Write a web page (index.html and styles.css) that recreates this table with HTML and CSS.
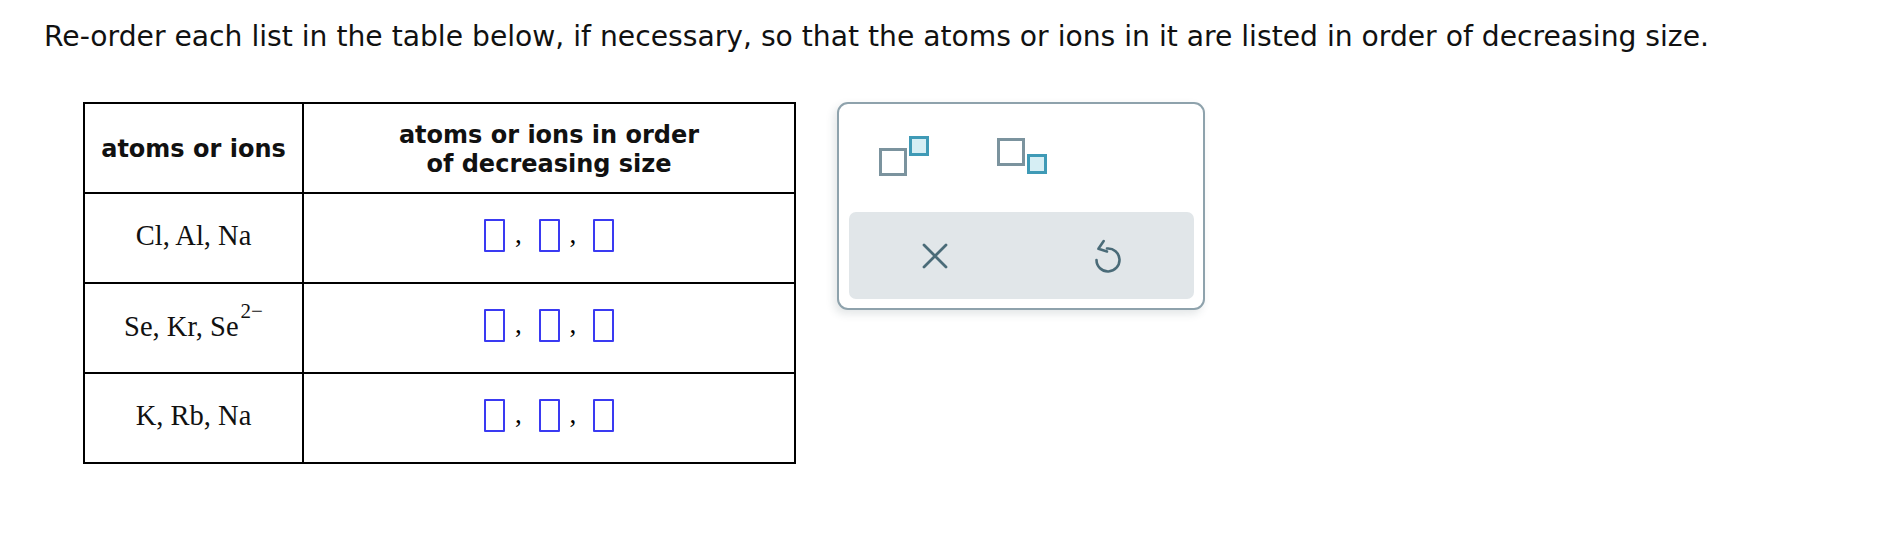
FILE: index.html
```html
<!DOCTYPE html>
<html>
<head>
<meta charset="utf-8">
<link rel="stylesheet" href="styles.css">
</head>
<body>
<p class="prompt">Re-order each list in the table below, if necessary, so that the atoms or ions in it are listed in order of decreasing size.</p>
<div class="work">
  <div class="grid">
    <div class="cell head"><span>atoms or ions</span></div>
    <div class="cell head"><span>atoms or ions in order<br>of decreasing size</span></div>

    <div class="cell chem"><span>Cl, Al, Na</span></div>
    <div class="cell ans"><span><span class="slot"></span>, <span class="slot"></span>, <span class="slot"></span></span></div>

    <div class="cell chem"><span>Se, Kr, Se<sup class="charge">2−</sup></span></div>
    <div class="cell ans"><span><span class="slot"></span>, <span class="slot"></span>, <span class="slot"></span></span></div>

    <div class="cell chem"><span>K, Rb, Na</span></div>
    <div class="cell ans"><span><span class="slot"></span>, <span class="slot"></span>, <span class="slot"></span></span></div>
  </div>

  <div class="panel">
    <div class="tools">
      <div class="tool">
        <svg width="50" height="40" viewBox="0 0 50 40">
          <rect x="1.5" y="13.5" width="25" height="25" fill="#fff" stroke="#7b939e" stroke-width="3"/>
          <rect x="31.5" y="1.5" width="17" height="17" fill="#d6eef4" stroke="#3f9ab6" stroke-width="3"/>
        </svg>
      </div>
      <div class="tool">
        <svg width="50" height="36" viewBox="0 0 50 36">
          <rect x="1.5" y="1.5" width="25" height="25" fill="#fff" stroke="#7b939e" stroke-width="3"/>
          <rect x="31.5" y="17.5" width="17" height="17" fill="#d6eef4" stroke="#3f9ab6" stroke-width="3"/>
        </svg>
      </div>
    </div>
    <div class="actions">
      <div class="act">
        <svg width="26" height="26" viewBox="0 0 26 26">
          <path d="M2 2 L24 24 M24 2 L2 24" stroke="#4a6b78" stroke-width="2.8" stroke-linecap="round" fill="none"/>
        </svg>
      </div>
      <div class="act">
        <svg width="26" height="34" viewBox="0 0 26 34">
          <path d="M12 9.5 A11.5 11.5 0 1 1 1.5 21" stroke="#4a6b78" stroke-width="2.6" stroke-linecap="round" fill="none"/>
          <path d="M8.7 2 L3.4 9.8 L12 12.5" stroke="#4a6b78" stroke-width="2.6" stroke-linecap="round" stroke-linejoin="round" fill="none"/>
        </svg>
      </div>
    </div>
  </div>
</div>
</body>
</html>
```

FILE: styles.css
```css
html, body {
  margin: 0;
  padding: 0;
  background: #fff;
}

body {
  color: #000;
}

.prompt {
  margin: 0;
  padding: 21px 0 0 44px;
  font-family: "DejaVu Sans", Verdana, sans-serif;
  font-size: 28.2px;
  line-height: 32px;
  color: #111;
}

.work {
  display: flex;
  align-items: flex-start;
  margin: 49px 0 0 83px;
  gap: 41px;
}

.grid {
  display: grid;
  grid-template-columns: 219px 492px;
  grid-auto-rows: 90px;
  border-left: 2px solid #000;
  border-top: 2px solid #000;
}

.cell {
  border-right: 2px solid #000;
  border-bottom: 2px solid #000;
  display: flex;
  align-items: center;
  justify-content: center;
  text-align: center;
}

.head {
  font-family: "DejaVu Sans", Verdana, sans-serif;
  font-weight: bold;
  font-size: 24px;
  line-height: 29px;
  color: #111;
  padding-top: 3px;
}

.chem {
  font-family: "Liberation Serif", "Times New Roman", serif;
  font-size: 28.5px;
  line-height: 28px;
  color: #111;
  padding-bottom: 4px;
}

.charge {
  font-size: 21px;
  vertical-align: 18px;
  line-height: 0;
  margin-left: 2px;
}

.ans {
  font-family: "Liberation Serif", "Times New Roman", serif;
  font-size: 27px;
  line-height: 27px;
  padding-bottom: 5px;
  white-space: pre;
}

.slot {
  display: inline-block;
  width: 17px;
  height: 29px;
  border: 2px solid #3a3af2;
  border-radius: 1px;
  margin: 0 10px;
  vertical-align: -9px;
}

.panel {
  width: 345px;
  padding: 0 9px 9px 10px;
  border: 2px solid #8ea2ac;
  border-radius: 11px;
  background: #fff;
  box-shadow: -3px 4px 9px rgba(40, 60, 70, 0.13);
}

.tools {
  display: flex;
  height: 104px;
  margin-left: -4px;
}

.tool {
  width: 118px;
  display: flex;
  align-items: center;
  justify-content: center;
}

.actions {
  margin-top: 4px;
  height: 87px;
  display: flex;
  background: #e1e6e9;
  border-radius: 7px;
}

.act {
  flex: 1;
  display: flex;
  align-items: center;
  justify-content: center;
}
```
